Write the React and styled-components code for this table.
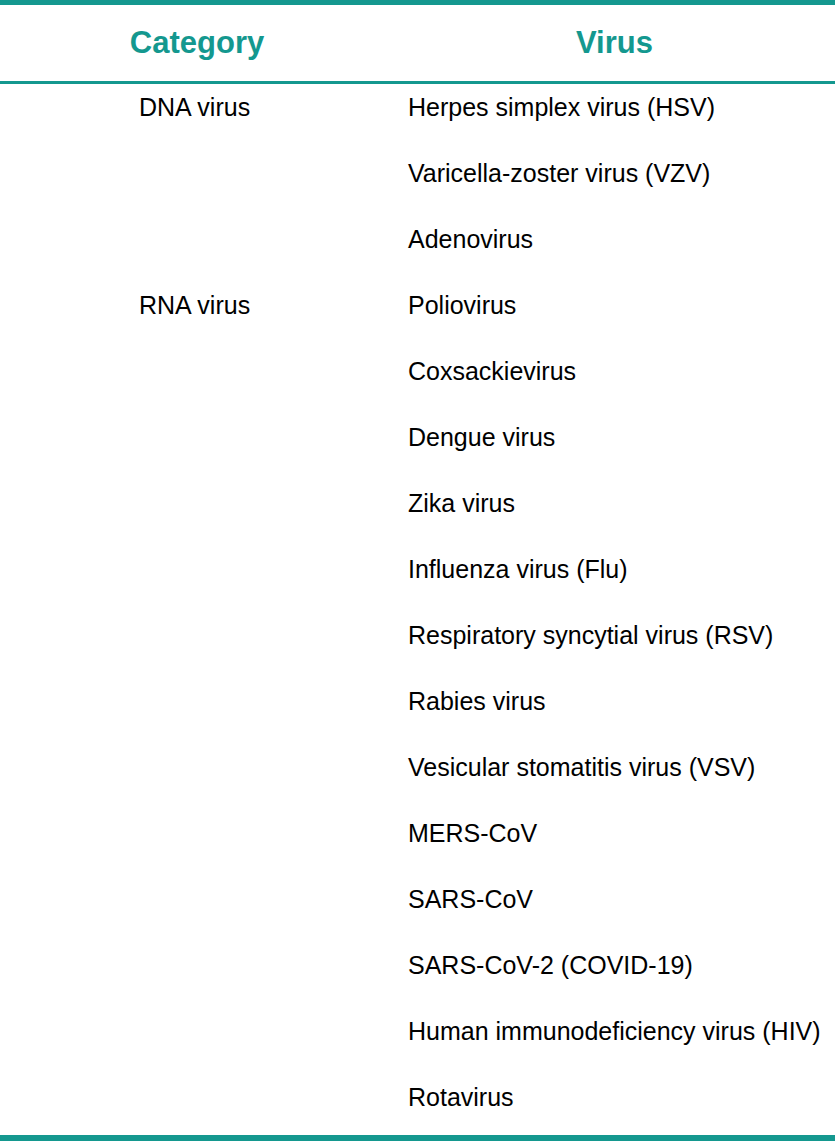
import React from "react";
import styled, { createGlobalStyle } from "styled-components";

const teal = "#14988f";

const GlobalStyle = createGlobalStyle`
  html, body {
    margin: 0;
    padding: 0;
    background: #ffffff;
  }
  body {
    font-family: "Liberation Sans", Arial, sans-serif;
    color: #000000;
  }
`;

const Table = styled.div`
  width: 835px;
  border-top: 5px solid ${teal};
  border-bottom: 6px solid ${teal};
`;

const HeadRow = styled.div`
  display: grid;
  grid-template-columns: 394px 441px;
  height: 76px;
  border-bottom: 3px solid ${teal};
`;

const HeadCell = styled.div`
  display: flex;
  align-items: center;
  justify-content: center;
  font-size: 31px;
  font-weight: bold;
  color: ${teal};
`;

const Group = styled.div`
  display: grid;
  grid-template-columns: 394px 441px;
`;

const CategoryCell = styled.div`
  padding: 9px 0 0 139px;
  font-size: 25px;
  line-height: normal;
`;

const VirusList = styled.div`
  display: flex;
  flex-direction: column;
`;

const VirusItem = styled.div`
  height: ${props => props.$short ? "61px" : "66px"};
  box-sizing: border-box;
  padding: 9px 0 0 14px;
  font-size: 25px;
  line-height: normal;
  white-space: nowrap;
`;

const GROUPS = [
  {
    category: "DNA virus",
    viruses: [
      "Herpes simplex virus (HSV)",
      "Varicella-zoster virus (VZV)",
      "Adenovirus",
    ],
  },
  {
    category: "RNA virus",
    viruses: [
      "Poliovirus",
      "Coxsackievirus",
      "Dengue virus",
      "Zika virus",
      "Influenza virus (Flu)",
      "Respiratory syncytial virus (RSV)",
      "Rabies virus",
      "Vesicular stomatitis virus (VSV)",
      "MERS-CoV",
      "SARS-CoV",
      "SARS-CoV-2 (COVID-19)",
      "Human immunodeficiency virus (HIV)",
      "Rotavirus",
    ],
  },
];

export default function App() {
  return (
    <>
      <GlobalStyle />
      <Table>
        <HeadRow>
          <HeadCell>Category</HeadCell>
          <HeadCell>Virus</HeadCell>
        </HeadRow>
        {GROUPS.map((group, gi) => (
          <Group key={group.category}>
            <CategoryCell>{group.category}</CategoryCell>
            <VirusList>
              {group.viruses.map((virus, vi) => (
                <VirusItem
                  key={virus}
                  $short={gi === GROUPS.length - 1 && vi === group.viruses.length - 1}
                >
                  {virus}
                </VirusItem>
              ))}
            </VirusList>
          </Group>
        ))}
      </Table>
    </>
  );
}
